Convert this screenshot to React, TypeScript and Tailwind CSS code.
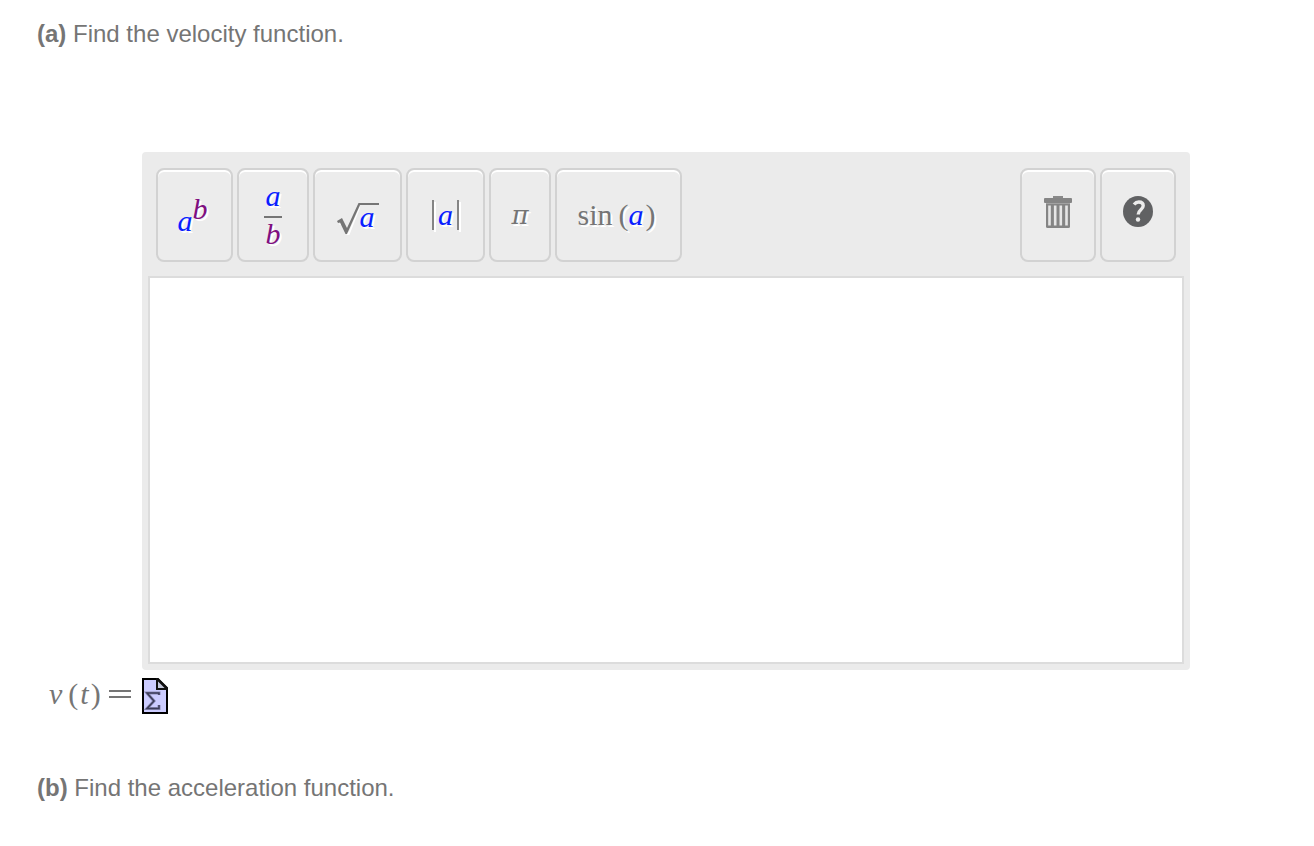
import type { ReactNode } from "react";

const serif = "font-['Liberation_Serif','Times_New_Roman',serif]";

const keyClass =
  "flex h-[94px] shrink-0 items-center justify-center rounded-lg border-2 border-[#d2d2d2] bg-[#ececec] shadow-[inset_0_2px_0_#fff] [text-shadow:2px_2px_0_#fff]";

function Key({ label, width, children }: { label: string; width: string; children: ReactNode }) {
  return (
    <button type="button" aria-label={label} className={`${keyClass} ${width}`}>
      {children}
    </button>
  );
}

function A() {
  return <i className="text-[#0a1eff]">a</i>;
}

function B() {
  return <i className="text-[#800f80]">b</i>;
}

function TrashIcon() {
  return (
    <svg width="28" height="32" viewBox="0 0 28 32" aria-hidden="true">
      <path d="M9 3V0h10v3" fill="#8a8a8a" />
      <rect x="0" y="2" width="28" height="5" rx="1" fill="#858585" />
      <path d="M2 7h24v23.500q0 1.500-1.500 1.500h-21Q2 32 2 30.500z" fill="#858585" />
      <path d="M5.500 9.500v20M11.200 9.500v20M16.800 9.500v20M22.500 9.500v20" stroke="#e6e6e6" strokeWidth="2.600" />
      <path d="M2 7.500h24" stroke="#a2a2a2" />
    </svg>
  );
}

function HelpIcon() {
  return (
    <svg width="30" height="32" viewBox="0 0 30 32" aria-hidden="true">
      <ellipse cx="15" cy="15.500" rx="15" ry="15.500" fill="#606163" />
      <path
        d="M11 8.500c1.500-1.800 3-2.500 4.800-2.500 2.700 0 4.400 1.500 4.400 3.800 0 4-5 4-5 8.700"
        fill="none"
        stroke="#ececec"
        strokeWidth="3.400"
      />
      <circle cx="15" cy="23.500" r="2.200" fill="#ececec" />
    </svg>
  );
}

function SigmaPageIcon() {
  return (
    <svg width="26" height="36" viewBox="0 0 26 36" aria-hidden="true">
      <path d="M1 1h15l9 9v25H1z" fill="#ccccff" stroke="#000" strokeWidth="2" />
      <path d="M15 1v10h10z" fill="#c4c8dc" stroke="#111" strokeWidth="2" />
      <path
        d="M17 17v-2H5l7 8-7 7.500h12V27"
        fill="none"
        stroke="#8c8cb4"
        strokeWidth="3"
      />
      <path d="M17 17v-2H5l7 8-7 7.500h12V27" fill="none" stroke="#3b3b58" strokeWidth="1.500" />
    </svg>
  );
}

export default function App() {
  return (
    <main className="bg-white pb-10 pl-[37px] pt-[18px] font-['Liberation_Sans',Arial,sans-serif] text-2xl leading-8 text-[#757575]">
      <p>
        <b>(a)</b> Find the velocity function.
      </p>

      <section
        aria-label="Equation editor"
        className="ml-[105px] mr-[124px] mt-[102px] rounded-[4px] bg-[#ebebeb] p-1.5 pt-4"
      >
        <div className={`flex justify-between px-2 text-[30px] leading-8 ${serif}`}>
          <div className="flex gap-1">
            <Key label="a to the power b" width="w-[77px]">
              <span className="pt-3">
                <A />
              </span>
              <span className="pb-3 pr-1">
                <B />
              </span>
            </Key>
            <Key label="a over b" width="w-[72px]">
              <span className="flex w-[18px] flex-col items-center">
                <A />
                <span className="mt-1 h-[2px] w-full bg-[#757575]" />
                <B />
              </span>
            </Key>
            <Key label="Square root of a" width="w-[89px]">
              <span className="flex pt-2">
                <svg width="23" height="32" viewBox="0 0 23 32" aria-hidden="true">
                  <path d="M2 21l4.500-2.500 5 11L23 3v2L12 33h-1.500L5 21 3 22z" fill="#fff" />
                  <path d="M0 18l5-3 5 10L21.500 0H23v2L10 31H8.500L3 19.500 1 20z" fill="#757575" />
                </svg>
                <span className="h-8 border-t-2 border-[#757575] pr-1 leading-6">
                  <A />
                </span>
              </span>
            </Key>
            <Key label="Absolute value of a" width="w-[79px]">
              <span className="flex h-[30px] items-center gap-1">
                <span className="h-full w-[2px] bg-[#858585] shadow-[2px_2px_0_#fff]" />
                <A />
                <span className="h-full w-[2px] bg-[#858585] shadow-[2px_2px_0_#fff]" />
              </span>
            </Key>
            <Key label="Pi" width="w-[62px]">
              <i className="font-['DejaVu_Serif',serif] text-[26px]">π</i>
            </Key>
            <Key label="Sine of a" width="w-[127px]">
              <span className="flex pr-1">
                <span className="mr-1.5">sin</span>
                <span>(</span>
                <A />
                <span className="ml-0.5">)</span>
              </span>
            </Key>
          </div>
          <div className="flex gap-1">
            <Key label="Clear" width="w-[76px]">
              <span className="pb-1.5">
                <TrashIcon />
              </span>
            </Key>
            <Key label="Help" width="w-[76px]">
              <span className="pb-1.5">
                <HelpIcon />
              </span>
            </Key>
          </div>
        </div>
        <textarea
          aria-label="Equation"
          className="mt-3.5 block h-[388px] w-full resize-none border-2 border-[#dcdcdc] bg-white p-2 outline-none"
        />
      </section>

      <div className="mt-2 flex items-center pl-3">
        <div className={`flex w-[93px] items-center pb-1 text-[30px] leading-8 ${serif}`}>
          <i>v</i>
          <span className="ml-1.5">(</span>
          <i className="mx-0.5">t</i>
          <span>)</span>
          <span className="ml-2 flex h-2 w-[22px] flex-col justify-between">
            <span className="h-[2px] bg-[#757575]" />
            <span className="h-[2px] bg-[#757575]" />
          </span>
        </div>
        <button type="button" aria-label="Open equation editor">
          <SigmaPageIcon />
        </button>
      </div>

      <p className="mt-[58px]">
        <b>(b)</b> Find the acceleration function.
      </p>
    </main>
  );
}
